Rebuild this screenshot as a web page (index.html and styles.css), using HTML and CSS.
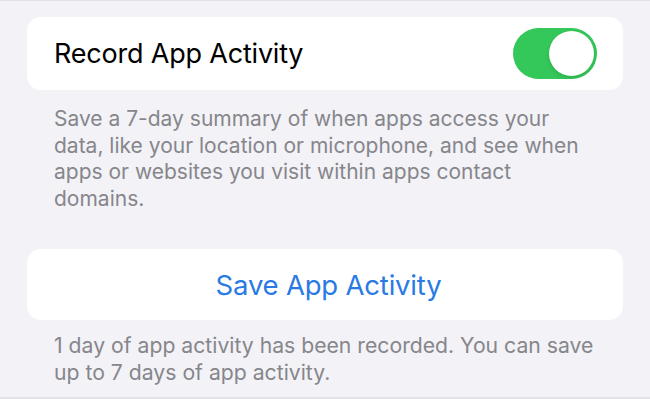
FILE: index.html
```html
<!DOCTYPE html>
<html lang="en">
<head>
    <meta charset="UTF-8">
    <meta name="viewport" content="width=device-width, initial-scale=1.0">
    <title>Record App Activity</title>
    <link rel="stylesheet" href="styles.css">
</head>
<body>
    <div class="screen">
        <div class="cell">
            <span class="cell-label">Record App Activity</span>
            <div class="switch is-on">
                <div class="switch-knob"></div>
            </div>
        </div>
        <p class="footnote">Save a 7-day summary of when apps access your data, like your location or microphone, and see when apps or websites you visit within apps contact domains.</p>

        <div class="cell cell-action">
            <span class="action-label">Save App Activity</span>
        </div>
        <p class="footnote footnote-small">1 day of app activity has been recorded. You can save up to 7 days of app activity.</p>
    </div>
</body>
</html>
```

FILE: styles.css
```css
* {
    box-sizing: border-box;
}

body {
    margin: 0;
    background-color: #f2f2f7;
    font-family: "Inter", "Liberation Sans", sans-serif;
    -webkit-font-smoothing: antialiased;
}

.screen {
    height: 399px;
    border-top: 1px solid #e1e1e6;
    border-bottom: 2px solid #e1e1e6;
    padding: 16px 27px 0;
    overflow: hidden;
}

.cell {
    height: 73px;
    background-color: #ffffff;
    border-radius: 14px;
    display: flex;
    align-items: center;
    justify-content: space-between;
    padding: 0 26px 0 27px;
}

.cell-label {
    font-size: 27px;
    color: #000000;
    letter-spacing: -0.2px;
}

.switch {
    width: 84px;
    height: 51px;
    border-radius: 26px;
    background-color: #e9e9ea;
    padding: 3px;
    display: flex;
}

.switch.is-on {
    background-color: #34c759;
    justify-content: flex-end;
}

.switch-knob {
    width: 45px;
    height: 45px;
    border-radius: 50%;
    background-color: #ffffff;
    box-shadow: 0 2px 4px rgba(0, 0, 0, 0.12);
}

.footnote {
    margin: 16px 0 37px;
    padding: 0 22px 0 27px;
    font-size: 21px;
    line-height: 26.5px;
    color: #86868b;
}

.cell-action {
    height: 71px;
    justify-content: center;
    padding-left: 33px;
}

.action-label {
    font-size: 27.5px;
    color: #2a7ae4;
    letter-spacing: -0.2px;
}

.footnote-small {
    margin: 12px 0 0;
    font-size: 21.2px;
}
```
